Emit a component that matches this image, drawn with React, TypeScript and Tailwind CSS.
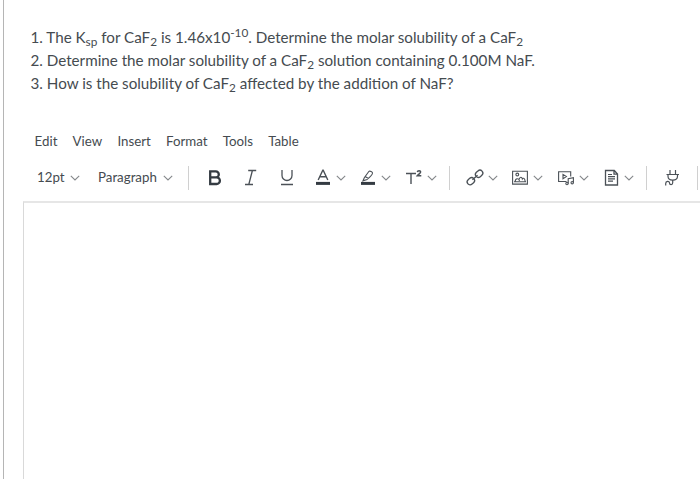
import type { ReactNode } from 'react';

const menus = ['Edit', 'View', 'Insert', 'Format', 'Tools', 'Table'];

function Chevron({ className = '' }: { className?: string }) {
  return (
    <svg
      className={`h-[6px] w-[10px] shrink-0 ${className}`}
      viewBox="0 0 10 6"
      fill="none"
      stroke="#85888b"
      strokeWidth="1.1"
    >
      <path d="M.8.8 5 4.9 9.2.8" />
    </svg>
  );
}

function Divider({ className = '' }: { className?: string }) {
  return <div className={`h-6 w-px shrink-0 bg-[#d0d0d0] ${className}`} />;
}

interface IconProps {
  className?: string;
  children: ReactNode;
}

function Icon({ className = '', children }: IconProps) {
  return (
    <svg
      className={`h-4 w-4 shrink-0 overflow-visible ${className}`}
      viewBox="0 0 16 16"
      fill="none"
      stroke="#4b5157"
      strokeWidth="1.1"
    >
      {children}
    </svg>
  );
}

function Question() {
  return (
    <div className="pt-[26px] pl-[26.5px] text-[15.2px] leading-[23px] whitespace-nowrap [&_sub]:text-[11.8px] [&_sup]:text-[11.8px]">
      <p className="h-[23px] w-fit">
        1. The K<sub>sp</sub> for CaF<sub>2</sub> is 1.46x10<sup>-10</sup>. Determine the molar
        solubility of a CaF<sub>2</sub>
      </p>
      <p className="h-[23px] w-fit">
        2. Determine the molar solubility of a CaF<sub>2</sub> solution containing 0.100M NaF.
      </p>
      <p className="h-[23px] w-fit">
        3. How is the solubility of CaF<sub>2</sub> affected by the addition of NaF?
      </p>
    </div>
  );
}

function Toolbar() {
  return (
    <div className="flex h-[48px] items-center pt-[2px] pl-[33px] text-[13.3px]">
      <button className="flex w-[61px] items-center">
        <span className="w-[33px] text-left">12pt</span>
        <Chevron />
      </button>
      <button className="flex w-[90px] items-center">
        <span className="w-[65px] text-left">Paragraph</span>
        <Chevron />
      </button>
      <Divider />

      {/* Bold, italic, underline */}
      <Icon className="ml-[18px]">
        <path
          d="M3.2 1.4h5.6a3 3 0 0 1 0 6H3.2zM3.2 7.4h6.4a3.3 3.3 0 0 1 0 6.6H3.2z"
          stroke="#343b42"
          strokeWidth="2.3"
        />
      </Icon>
      <Icon className="ml-5">
        <path d="M5.2.5h8M2 14.5h8M9.4.5 5.8 14.5" strokeWidth="1.3" />
      </Icon>
      <Icon className="ml-5">
        <path d="M3 0v5.5a5 5 0 0 0 10 0V0M2 14.5h12" strokeWidth="1.3" />
      </Icon>

      {/* Text and highlight colour */}
      <Icon className="ml-5">
        <path d="M3.2 10 7.8.2h.4l4.6 9.8M4.8 6.8h6.4" strokeWidth="1.4" />
        <path d="M1 13.4h14" stroke="#343b42" strokeWidth="3" />
      </Icon>
      <Chevron className="ml-[5px]" />
      <Icon className="ml-[14px]">
        <path d="m3 10.8 1.3-3 4.5-6.3c.9-1 4 .4 3.7 1.9-.4 1.4-3.2 4.3-5.4 6L3 10.8Zm2-4.2 3.6 2" />
        <path d="M1 13.4h14" stroke="#343b42" strokeWidth="3" />
      </Icon>
      <Chevron className="ml-[5px]" />
      <Icon className="ml-[15px]">
        <path d="M0 3.5h10M5 3.5V14" strokeWidth="1.4" />
        <path d="M11.4 2.2c.2-2.1 3.4-1.9 3.1 0-.1 1.2-2.2 2-3.2 3.5h4" strokeWidth="1.6" />
      </Icon>
      <Chevron className="ml-[5px]" />
      <Divider className="ml-3" />

      {/* Link, image, media, document */}
      <Icon className="ml-[17px]">
        <g transform="rotate(-42 8 7.5)" strokeWidth="1.3">
          <rect x="-1.5" y="4.6" width="7.9" height="5.8" rx="2.9" />
          <rect x="9.6" y="4.6" width="7.9" height="5.8" rx="2.9" />
          <path d="M4.5 7.5h7" />
        </g>
      </Icon>
      <Chevron className="ml-[5px]" />
      <Icon className="ml-[14px]">
        <path d="M.6 1.2h14.8v12.9H.6z" />
        <path d="M2 11.8h12M3.2 11.5c0-3.4 3.8-3.9 4.2-.5M7 9.3c1-2.6 2.8-2.6 3.3-.3 1-1.6 2.5-.8 2.9 2.5" />
        <circle cx="5.3" cy="4.5" r="1.4" />
      </Icon>
      <Chevron className="ml-[5px]" />
      <Icon className="ml-[15px]">
        <path d="M8.5 11.5H.6V1.8h12.1V6.5" />
        <path d="M5 4.4v4.4l3.4-2.2zM10.2 13.5V8.6l5.2-1v5.1" />
        <circle cx="9" cy="13.5" r="1.2" />
        <circle cx="14.2" cy="12.7" r="1.2" />
      </Icon>
      <Chevron className="ml-[5px]" />
      <Icon className="ml-[15px]">
        <path d="M1.5.5h8.8L13.5 4v11H1.5zM10 .5v3.7h3.5" strokeWidth="1.3" />
        <path d="M4 4.5h4M4 6.7h7M4 8.9h7M4 11.1h5" strokeWidth="1.2" />
      </Icon>
      <Chevron className="ml-[4px]" />
      <Divider className="ml-3" />

      <Icon className="ml-[17px]">
        <path
          d="M6 0v4.5M11.5 0v4.5M2.5 4.5H15M4 4.5v1.8c0 2.4 1.6 3.8 4.7 3.8s4.8-1.4 4.8-3.8V4.5"
          strokeWidth="1.2"
        />
        <path d="M8.7 10.1v2.7c0 2.5-3.2 2.3-3.2.2 0-2.4-3.8-2.1-3.8.6v2" strokeWidth="1.2" />
      </Icon>
      <Divider className="ml-[17px]" />
    </div>
  );
}

export default function App() {
  return (
    <div className="flex h-[479px] w-[700px] overflow-hidden bg-white font-[Lato,sans-serif] text-[#454b50]">
      <div className="ml-[3px] flex w-[697px] flex-col border-l border-[#b5b5b5]">
        <Question />

        {/* Editor menu bar */}
        <div className="mt-[35px] flex h-[23px] items-center gap-[15.2px] pl-[30.6px] text-[13.3px]">
          {menus.map((menu) => (
            <button key={menu}>{menu}</button>
          ))}
        </div>

        <Toolbar />

        {/* Editing area */}
        <div className="ml-[19px] flex-1 border-t-2 border-l border-t-[#e6e6e6] border-l-[#d9d9d9]" />
      </div>
    </div>
  );
}
